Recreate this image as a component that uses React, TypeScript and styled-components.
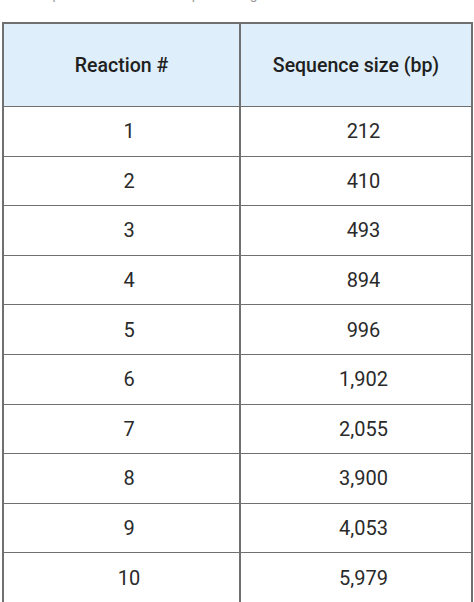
import React from 'react';
import styled, { createGlobalStyle } from 'styled-components';

const GlobalStyle = createGlobalStyle`
  html, body {
    margin: 0;
    padding: 0;
    background: #ffffff;
  }
  body {
    font-family: Roboto, "Liberation Sans", Arial, sans-serif;
  }
`;

const Page = styled.div`
  width: 474px;
  height: 602px;
  overflow: hidden;
  padding: 0 1px 0 2px;
  box-sizing: border-box;
`;

const Caption = styled.p`
  margin: -15px 0 0 0;
  height: 37px;
  font-size: 14px;
  line-height: 18px;
  color: #9a9a9a;
  padding-left: 30px;
`;

const Table = styled.table`
  width: 471px;
  border-collapse: collapse;
  table-layout: fixed;
  border: 2px solid #707070;
`;

const HeadCell = styled.th`
  height: 82px;
  padding: 0;
  background: #deeefa;
  color: #202020;
  font-size: 19.5px;
  font-weight: 500;
  text-align: center;
  border-bottom: 1px solid #707070;

  & + & {
    border-left: 2px solid #707070;
  }
`;

const Cell = styled.td`
  height: 48.6px;
  padding: 0 0 0 15px;
  color: #2a2a2a;
  font-size: 20px;
  font-weight: 400;
  text-align: center;
  border-top: 1px solid #707070;

  & + & {
    border-left: 2px solid #707070;
  }
`;

const rows: [string, string][] = [
  ['1', '212'],
  ['2', '410'],
  ['3', '493'],
  ['4', '894'],
  ['5', '996'],
  ['6', '1,902'],
  ['7', '2,055'],
  ['8', '3,900'],
  ['9', '4,053'],
  ['10', '5,979'],
];

export default function App() {
  return (
    <>
      <GlobalStyle />
      <Page>
        <Caption>Sequence sizes of the amplified targets</Caption>
        <Table>
          <colgroup>
            <col style={{ width: 237 }} />
            <col />
          </colgroup>
          <thead>
            <tr>
              <HeadCell>Reaction #</HeadCell>
              <HeadCell>Sequence size (bp)</HeadCell>
            </tr>
          </thead>
          <tbody>
            {rows.map(([n, size]) => (
              <tr key={n}>
                <Cell>{n}</Cell>
                <Cell>{size}</Cell>
              </tr>
            ))}
          </tbody>
        </Table>
      </Page>
    </>
  );
}
